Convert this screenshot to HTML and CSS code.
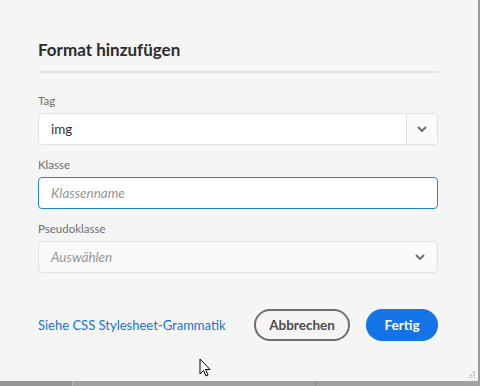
FILE: index.html
```html
<!DOCTYPE html>
<html lang="de">
<head>
<link rel="stylesheet" href="styles.css">
</head>
<body>
  <div class="screen">
    <div class="dialog">
      <h2 class="dialog-title">Format hinzufügen</h2>
      <div class="divider"></div>

      <div class="field">
        <label class="field-label">Tag</label>
        <div class="combo">
          <span class="combo-value">img</span>
          <span class="combo-btn">
            <svg class="chevron" viewBox="0 0 10 6"><path d="M1 1l4 4 4-4"/></svg>
          </span>
        </div>
      </div>

      <div class="field">
        <label class="field-label">Klasse</label>
        <div class="textbox focused">
          <span class="placeholder">Klassenname</span>
        </div>
      </div>

      <div class="field">
        <label class="field-label">Pseudoklasse</label>
        <div class="picker">
          <span class="placeholder">Auswählen</span>
          <svg class="chevron" viewBox="0 0 10 6"><path d="M1 1l4 4 4-4"/></svg>
        </div>
      </div>

      <div class="footer">
        <a class="help-link" href="#">Siehe CSS Stylesheet-Grammatik</a>
        <div class="actions">
          <button class="btn btn-secondary">Abbrechen</button>
          <button class="btn btn-primary">Fertig</button>
        </div>
      </div>

      <svg class="grip" viewBox="0 0 10 10"><path d="M9 2L2 9M9 5L5 9M9 8L8 9"/></svg>
      <svg class="cursor" viewBox="0 0 12 19"><path d="M1 1v15l3.5-3.5 2.5 5.5 2-1-2.5-5.5H11z"/></svg>
    </div>
    <div class="taskbar">
      <span class="seg seg-a"></span>
      <span class="seg seg-b"></span>
      <span class="seg seg-c"></span>
    </div>
  </div>
</body>
</html>
```

FILE: styles.css
```css
body {
  margin: 0;
  background: #9a9a9a;
  font-family: Lato, "Open Sans", sans-serif;
}

.screen {
  width: 480px;
  height: 386px;
  overflow: hidden;
}

.dialog {
  position: relative;
  width: 478px;
  height: 381px;
  box-sizing: border-box;
  padding: 38px 40px 0 38px;
  background: #f5f5f5;
}

.dialog-title {
  margin: 0;
  font-size: 17px;
  line-height: 24px;
  font-weight: 700;
  color: #2c2c2c;
}

.divider {
  height: 2px;
  margin-top: 9px;
  margin-bottom: 20px;
  background: #e1e1e1;
}

.field {
  display: flex;
  flex-direction: column;
  gap: 4px;
  margin-bottom: 12px;
}

.field-label {
  font-size: 11.5px;
  line-height: 16px;
  color: #6e6e6e;
}

.combo,
.textbox,
.picker {
  display: flex;
  align-items: center;
  height: 32px;
  box-sizing: border-box;
  border: 1px solid #e1e1e1;
  border-radius: 4px;
  font-size: 13.5px;
}

.combo {
  background: #fff;
  overflow: hidden;
}

.combo-value {
  flex: 1;
  padding-left: 12px;
  color: #323232;
}

.combo-btn {
  display: flex;
  align-items: center;
  justify-content: center;
  width: 30px;
  height: 100%;
  border-left: 1px solid #e1e1e1;
  background: #fafafa;
}

.textbox {
  background: #fff;
  padding-left: 12px;
}

.textbox.focused {
  border-color: #2680eb;
}

.picker {
  justify-content: space-between;
  padding: 0 12px;
  background: #fafafa;
}

.placeholder {
  font-style: italic;
  color: #959595;
}

.chevron {
  width: 10px;
  height: 6px;
  fill: none;
  stroke: #6e6e6e;
  stroke-width: 2;
}

.footer {
  display: flex;
  align-items: center;
  justify-content: space-between;
  margin-top: 36px;
}

.help-link {
  font-size: 13px;
  color: #1473e6;
  text-decoration: none;
}

.actions {
  display: flex;
  gap: 16px;
}

.btn {
  height: 32px;
  box-sizing: border-box;
  padding: 0;
  border-radius: 16px;
  font-family: inherit;
  font-size: 13.5px;
  font-weight: 700;
  text-align: center;
}

.btn-secondary {
  width: 96px;
  border: 2px solid #6e6e6e;
  background: transparent;
  color: #4b4b4b;
}

.btn-primary {
  width: 72px;
  border: none;
  background: #1473e6;
  color: #fff;
}

.grip {
  position: absolute;
  right: 2px;
  bottom: 2px;
  width: 10px;
  height: 10px;
  fill: none;
  stroke: #6e6e6e;
  stroke-width: 1;
  stroke-dasharray: 1 1;
}

.cursor {
  position: absolute;
  left: 199px;
  top: 358px;
  width: 12px;
  height: 19px;
  fill: #fff;
  stroke: #000;
  stroke-width: 1;
}

.taskbar {
  display: flex;
  height: 5px;
}

.seg {
  height: 100%;
  background: #a0a0a0;
}

.seg-a {
  width: 72px;
  background: #969696;
  border-right: 1px solid #b4b4b4;
}

.seg-b {
  width: 242px;
  border-right: 1px solid #8a8a8a;
}

.seg-c {
  flex: 1;
}
```
